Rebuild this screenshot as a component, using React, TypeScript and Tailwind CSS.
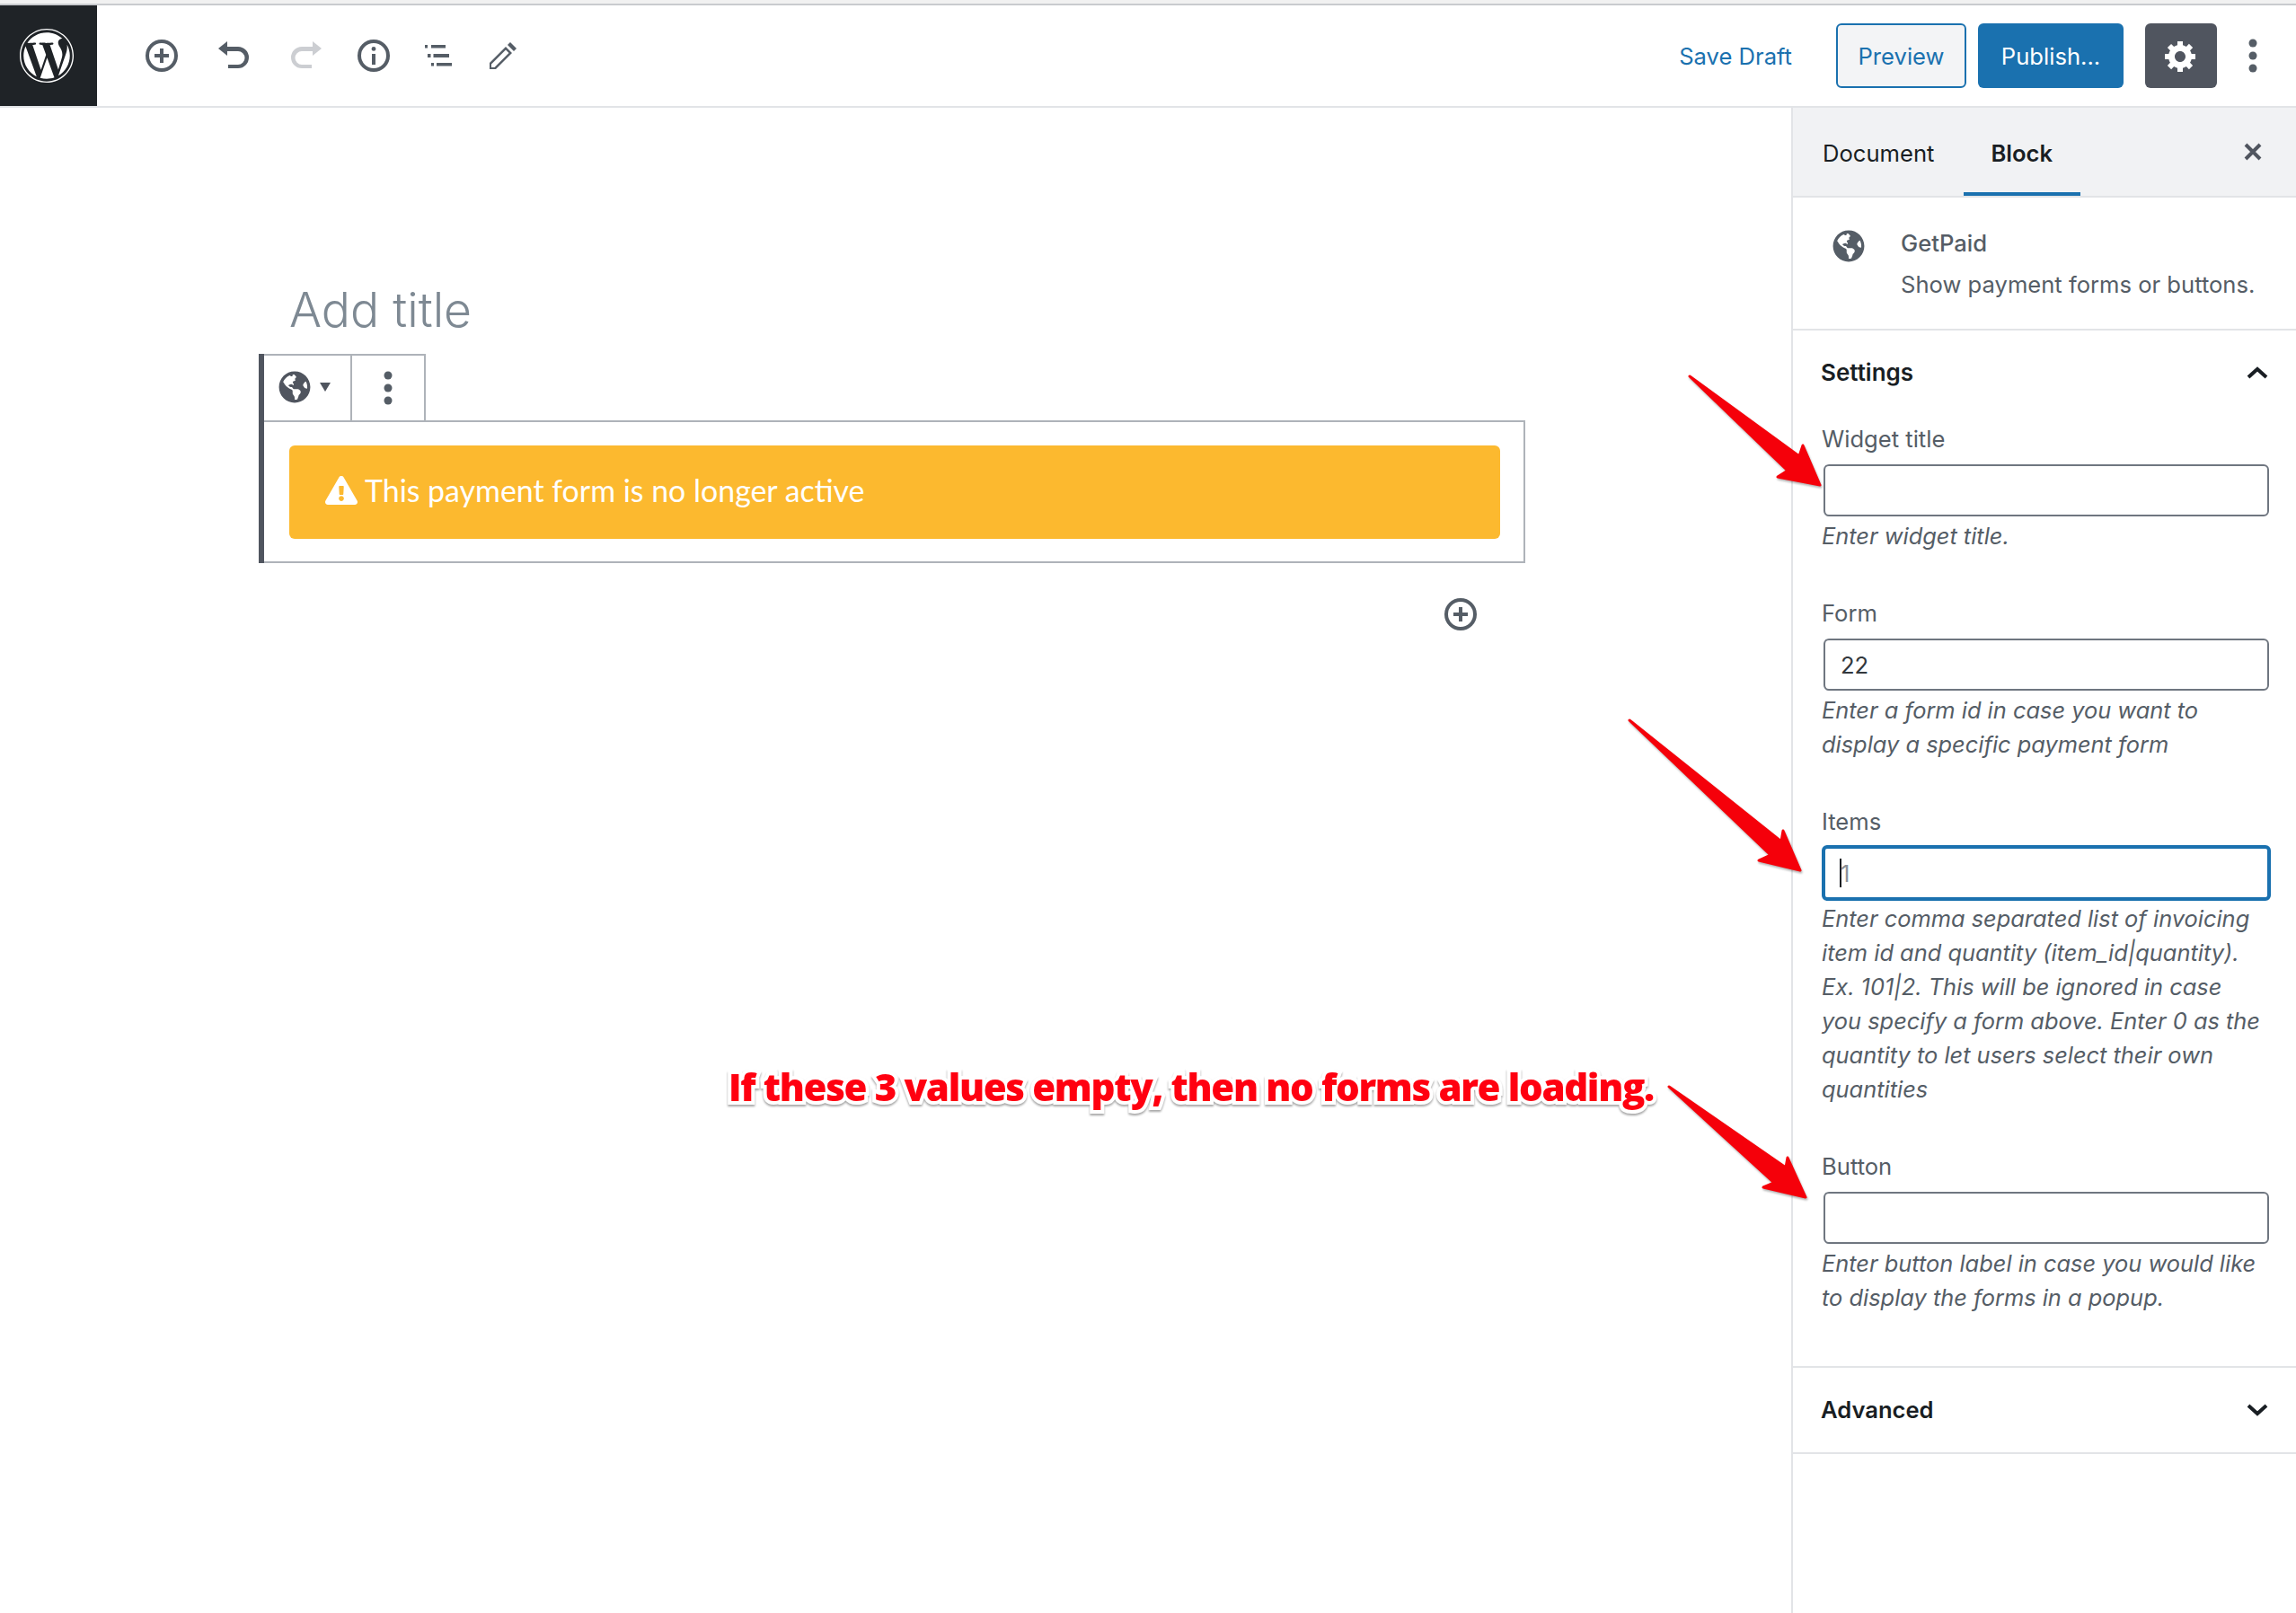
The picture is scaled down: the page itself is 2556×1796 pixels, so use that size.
import { FaGlobeAmericas, FaExclamationTriangle, FaWordpress } from "react-icons/fa";

const SANS = "font-['Inter','Noto_Sans',sans-serif]";

const ARROWS = [
  "1881,419 2003,508 2007,496 2026,540 1979,531 1990,524",
  "1814,802 1983,937 1985,925 2004,969 1958,958 1971,952",
  "1858,1210 1988,1300 1990,1289 2010,1333 1963,1322 1975,1317",
];

function PlusCircle() {
  return (
    <svg viewBox="0 0 20 20" className="h-10 w-10 fill-[#555d66]">
      <path d="M10 1a9 9 0 1 0 0 18 9 9 0 0 0 0-18zm0 16a7 7 0 1 1 0-14 7 7 0 0 1 0 14zm1-11H9v3H6v2h3v3h2v-3h3V9h-3V6z" />
    </svg>
  );
}

function Undo({ flip, className }: { flip?: boolean; className: string }) {
  return (
    <svg viewBox="0 0 20 20" className={`h-10 w-10 ${flip ? "-scale-x-100" : ""} ${className}`}>
      <path d="M6.5 5V2L1.5 6l5 4V7.5h6a3.75 3.75 0 0 1 0 7.5H7v2h5.5a6 6 0 0 0 0-12z" />
    </svg>
  );
}

function Info() {
  return (
    <svg viewBox="0 0 20 20" className="h-10 w-10 fill-[#555d66]">
      <path d="M10 1a9 9 0 1 0 0 18 9 9 0 0 0 0-18zm0 16a7 7 0 1 1 0-14 7 7 0 0 1 0 14z" />
      <path d="M9 9h2v6H9z" />
      <circle cx="10" cy="6.2" r="1.2" />
    </svg>
  );
}

function ListView() {
  return (
    <svg viewBox="0 0 40 40" className="h-10 w-10 fill-[#555d66]">
      <rect x="5" y="8" width="3" height="3.5" />
      <rect x="12" y="8" width="16" height="3.5" />
      <rect x="8" y="18" width="3.5" height="4" />
      <rect x="14.5" y="18" width="17.5" height="4" />
      <rect x="12" y="28" width="3" height="3.5" />
      <rect x="18" y="28" width="17" height="3.5" />
    </svg>
  );
}

function Pencil() {
  return (
    <svg viewBox="-5 -5 40 40" className="h-10 w-10 fill-[#555d66]">
      <path fillRule="evenodd" d="M0 30v-7L18 5l7 7L7 30zM2 24.5V28h3.5l16-16L18 8.5z" />
      <path d="M20 3l3-3 7 7-3 3z" />
    </svg>
  );
}

function Gear() {
  return (
    <svg viewBox="0 0 20 20" className="h-10 w-10 fill-white">
      <path d="M18 12h-2.18c-.17.7-.44 1.35-.81 1.93l1.54 1.54-2.1 2.1-1.54-1.54c-.58.36-1.23.63-1.91.79V19H8v-2.18c-.68-.16-1.33-.43-1.91-.79l-1.54 1.54-2.12-2.12 1.54-1.54c-.36-.58-.63-1.23-.79-1.91H1V9.03h2.17c.16-.7.44-1.35.8-1.94L2.43 5.55l2.1-2.1 1.54 1.54c.58-.37 1.24-.64 1.93-.81V2h3v2.18c.68.16 1.33.43 1.91.79l1.54-1.54 2.12 2.12-1.54 1.54c.36.59.64 1.24.8 1.94H18V12zm-8.5 1.5c1.66 0 3-1.34 3-3s-1.34-3-3-3-3 1.34-3 3 1.34 3 3 3z" />
    </svg>
  );
}

function Dots() {
  return (
    <svg viewBox="0 0 40 40" className="h-10 w-10 fill-[#555d66]">
      <circle cx="20" cy="6" r="4.5" />
      <circle cx="20" cy="20" r="4.5" />
      <circle cx="20" cy="34" r="4.5" />
    </svg>
  );
}

function Chevron({ up }: { up?: boolean }) {
  return (
    <svg viewBox="0 0 24 14" className="h-[14px] w-6 fill-none stroke-[#191e23] stroke-[4]">
      <path d={up ? "M2 12 12 3l10 9" : "M2 2l10 9 10-9"} />
    </svg>
  );
}

function Field({ label, help, value, focused }: { label: string; help: string; value?: string; focused?: boolean }) {
  return (
    <div className="mb-[51px]">
      <div className="mb-3 text-[25.6px] leading-8 text-[#555d66]">{label}</div>
      {focused ? (
        <div className="-my-[2px] -mr-[3px] flex h-[62px] items-center rounded-md border-4 border-[#1a71af] bg-white pl-[16px]">
          <span className="h-8 w-[2px] bg-[#191e23]" />
          <span className="-ml-[1px] pt-[2px] text-[25.6px] text-[#8a9097]">{value}</span>
        </div>
      ) : (
        <div className="-mr-[1px] ml-[2px] flex h-[58px] items-center rounded-md border-2 border-[#6f7680] bg-white pt-[2px] pl-[17px] text-[25.6px] text-[#32373c]">
          {value}
        </div>
      )}
      <p className="mt-[3px] pr-2 text-[25.4px] leading-[38px] text-[#555d66] italic">{help}</p>
    </div>
  );
}

export default function App() {
  return (
    <div className={`relative h-[1796px] w-[2556px] overflow-hidden bg-white ${SANS}`}>
      <div className="h-[6px] border-b-2 border-[#c9cbce] bg-[#f1f1f1]" />

      {/* top bar */}
      <header className="flex h-[114px] items-start border-b-2 border-[#e2e4e7]">
        <div className="flex h-[112px] w-[108px] items-center justify-center bg-[#1f2327] pr-1 text-white">
          <FaWordpress size={62} />
        </div>
        <div className="ml-[52px] mt-[36px] flex items-center">
          <PlusCircle />
          <div className="ml-10"><Undo className="fill-[#555d66]" /></div>
          <div className="ml-[41px]"><Undo flip className="fill-[#ccced2]" /></div>
          <div className="ml-[35px]"><Info /></div>
          <div className="ml-[32px]"><ListView /></div>
          <div className="ml-[32px]"><Pencil /></div>
        </div>
        <div className="ml-auto mt-5 flex items-center pr-[28px]">
          <span className="mr-[49px] pt-[2px] text-[25.6px] text-[#1a71af]">Save Draft</span>
          <div className="mr-[13px] flex h-[72px] w-[145px] items-center justify-center rounded-md border-2 border-[#1a71af] bg-[#f3f4f6] pt-[2px] text-[25.6px] text-[#1a71af]">
            Preview
          </div>
          <div className="mr-6 flex h-[72px] w-[162px] items-center justify-center rounded-md bg-[#1a71af] pt-[2px] text-[25.6px] text-white">
            Publish...
          </div>
          <div className="mr-5 flex h-[72px] w-20 items-center justify-center rounded-md bg-[#50555f]">
            <Gear />
          </div>
          <Dots />
        </div>
      </header>

      <div className="flex h-[1676px]">
        {/* editor */}
        <main className="flex-1">
          <h1 className="ml-[322px] mt-[185px] h-20 text-[53.5px] leading-[80px] font-light text-[#7e8993]">Add title</h1>
          <div className="ml-[288px] mt-[9px] w-[1410px] border-l-[6px] border-[#50555f]">
            <div className="flex h-[74px] w-[180px] border-t-2 border-r-2 border-[#aeb3b9]">
              <div className="flex w-[98px] items-center gap-[10px] border-r-2 border-[#aeb3b9] pb-[2px] pl-4 text-[#50555f]">
                <FaGlobeAmericas size={36} />
                <svg viewBox="0 0 12 12" className="h-3 w-3 fill-[#50555f]">
                  <path d="M0 1h12L6 11z" />
                </svg>
              </div>
              <div className="flex flex-1 items-center justify-center">
                <Dots />
              </div>
            </div>
            <div className="border-y-2 border-r-2 border-[#aeb3b9] pt-[26px] pr-[26px] pb-[25px] pl-[28px]">
              <div className="flex h-[104px] items-center gap-2 rounded-md bg-[#fcb92f] pb-1 pl-10 font-['Lato',sans-serif] text-[33.9px] text-white">
                <FaExclamationTriangle size={36} />
                <span>This payment form is no longer active</span>
              </div>
            </div>
          </div>
          <div className="ml-[1606px] mt-[37px] w-10">
            <PlusCircle />
          </div>
        </main>

        {/* sidebar */}
        <aside className="w-[562px] border-l-2 border-[#e2e4e7]">
          <div className="relative flex h-[100px] items-center border-b-2 border-[#e2e4e7] bg-[#f1f2f4] pt-1 pl-[33px] text-[25.6px]">
            <span className="text-[#191e23]">Document</span>
            <span className="ml-[63px] font-semibold text-[#191e23]">Block</span>
            <div className="absolute bottom-0 left-[190px] h-1 w-[130px] bg-[#1a71af]" />
            <svg viewBox="0 0 20 20" className="absolute right-[38px] top-[39px] h-5 w-5 fill-none stroke-[#50555f] stroke-[4]">
              <path d="M2 2l16 16M18 2 2 18" />
            </svg>
          </div>
          <div className="flex h-[148px] items-start border-b-2 border-[#e2e4e7] pl-[44px] pt-[36px] text-[#555d66]">
            <FaGlobeAmericas size={36} />
            <div className="ml-10 -mt-1">
              <div className="text-[25.6px] leading-[38px] font-medium">GetPaid</div>
              <div className="mt-2 text-[25.6px] leading-[38px]">Show payment forms or buttons.</div>
            </div>
          </div>
          <div className="border-b-2 border-[#e2e4e7] pt-px pr-[31px] pb-[6px] pl-[32px]">
            <div className="mb-[12px] flex h-[92px] items-center justify-between">
              <span className="-ml-px pb-[2px] text-[26px] font-semibold text-[#191e23]">Settings</span>
              <Chevron up />
            </div>
            <Field label="Widget title" help="Enter widget title." />
            <Field label="Form" value="22" help="Enter a form id in case you want to display a specific payment form" />
            <Field label="Items" value="1" focused help="Enter comma separated list of invoicing item id and quantity (item_id|quantity). Ex. 101|2. This will be ignored in case you specify a form above. Enter 0 as the quantity to let users select their own quantities" />
            <Field label="Button" help="Enter button label in case you would like to display the forms in a popup." />
          </div>
          <div className="flex h-[96px] items-center justify-between border-b-2 border-[#e2e4e7] pr-[31px] pl-[31px]">
            <span className="text-[25.6px] font-semibold text-[#191e23]">Advanced</span>
            <Chevron />
          </div>
        </aside>
      </div>

      {/* red annotation drawn over the screenshot */}
      <svg viewBox="0 0 2556 1796" className="pointer-events-none absolute inset-0 h-[1796px] w-[2556px] fill-[#f5000a] stroke-[#f5000a] drop-shadow-[1px_2px_1px_rgba(0,0,0,0.3)]">
        {ARROWS.map((points) => (
          <polygon key={points} points={points} strokeWidth="3" strokeLinejoin="round" />
        ))}
      </svg>
      <div className="absolute left-[811px] top-[1181px] font-['Open_Sans',sans-serif] text-[42px] leading-[58px] font-extrabold tracking-[-1.35px] text-[#ff0010] [-webkit-text-stroke:8px_white] drop-shadow-[0_2px_1px_rgba(0,0,0,0.35)] [paint-order:stroke_fill]">
        If these 3 values empty, then no forms are loading.
      </div>
    </div>
  );
}
